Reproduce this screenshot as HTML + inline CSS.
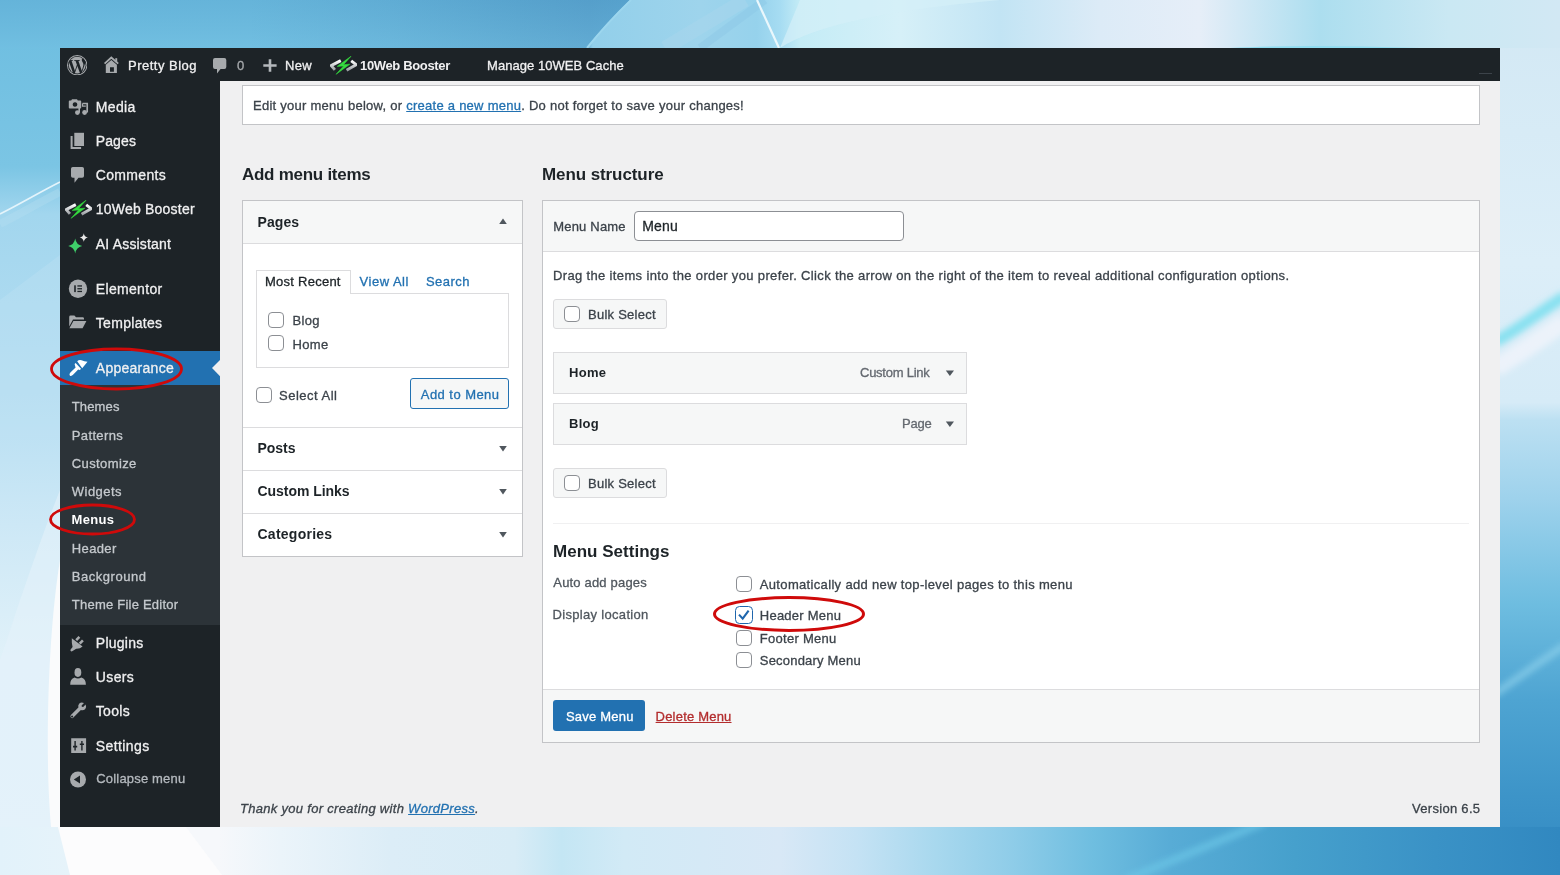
<!DOCTYPE html>
<html><head><meta charset="utf-8">
<style>
html,body{margin:0;padding:0;}
body{width:1560px;height:875px;position:relative;overflow:hidden;font-family:"Liberation Sans",sans-serif;background:#8fcbe6;}
.a{position:absolute;}
.t{position:absolute;white-space:nowrap;line-height:1;-webkit-text-stroke-width:0.3px;}
.mi{font-size:14px;color:#f0f0f1;letter-spacing:0.1px;}
.sm{font-size:13px;color:#c5c9cd;letter-spacing:0.15px;}
.bt{font-size:13px;color:#f0f0f1;letter-spacing:0.05px;}
.c{font-size:13px;color:#3c434a;letter-spacing:0.28px;}
.h{-webkit-text-stroke-width:0;font-size:17px;font-weight:bold;color:#1d2327;letter-spacing:-0.27px;}
.ah{-webkit-text-stroke-width:0;font-size:14px;font-weight:bold;color:#1d2327;letter-spacing:0.1px;}
.box{position:absolute;box-sizing:border-box;}
.cb{position:absolute;box-sizing:border-box;width:16px;height:16px;border:1px solid #8c8f94;border-radius:4px;background:#fff;}
</style></head><body>
<svg class="a" style="left:0;top:0" width="1560" height="875">
<defs><filter id="blur3" x="-50%" y="-50%" width="200%" height="200%"><feGaussianBlur stdDeviation="3"/></filter>
<linearGradient id="gTop" x1="0" y1="0" x2="1560" y2="0" gradientUnits="userSpaceOnUse">
  <stop offset="0" stop-color="#6cbde0"/>
  <stop offset="0.16" stop-color="#6dbde0"/>
  <stop offset="0.25" stop-color="#65b3d9"/>
  <stop offset="0.333" stop-color="#5ba7d0"/>
  <stop offset="0.375" stop-color="#58a2cd"/>
  <stop offset="0.38" stop-color="#92cfea"/>
  <stop offset="0.449" stop-color="#9ed4ec"/>
  <stop offset="0.485" stop-color="#96d2ec"/>
  <stop offset="0.5" stop-color="#a6dcf2"/>
  <stop offset="0.513" stop-color="#c4ecf6"/>
  <stop offset="0.577" stop-color="#d6f0f8"/>
  <stop offset="0.641" stop-color="#c2e4f4"/>
  <stop offset="0.705" stop-color="#dcebf7"/>
  <stop offset="0.769" stop-color="#e6eef8"/>
  <stop offset="0.846" stop-color="#acdeef"/>
  <stop offset="0.929" stop-color="#cae8f3"/>
  <stop offset="1" stop-color="#d2e8f4"/>
</linearGradient>
<linearGradient id="gTLv" x1="0" y1="0" x2="0" y2="48" gradientUnits="userSpaceOnUse">
  <stop offset="0" stop-color="#4f98c6" stop-opacity="0.25"/>
  <stop offset="1" stop-color="#7cc4e4" stop-opacity="0.3"/>
</linearGradient>
<linearGradient id="gTL" x1="0" y1="0" x2="640" y2="0" gradientUnits="userSpaceOnUse">
  <stop offset="0" stop-color="#6cbde0"/>
  <stop offset="0.39" stop-color="#6dbde0"/>
  <stop offset="0.61" stop-color="#65b3d9"/>
  <stop offset="0.81" stop-color="#5ba7d0"/>
  <stop offset="0.92" stop-color="#57a1cc"/>
  <stop offset="1" stop-color="#5aa6d0"/>
</linearGradient>
<linearGradient id="gBot" x1="0" y1="0" x2="1560" y2="0" gradientUnits="userSpaceOnUse">
  <stop offset="0" stop-color="#e2f2fa"/>
  <stop offset="0.045" stop-color="#e6f3fa"/>
  <stop offset="0.1" stop-color="#f6f8fb"/>
  <stop offset="0.14" stop-color="#f6f8fb"/>
  <stop offset="0.18" stop-color="#ebf4fa"/>
  <stop offset="0.25" stop-color="#dcedf7"/>
  <stop offset="0.33" stop-color="#d8ecf6"/>
  <stop offset="0.36" stop-color="#c4e6f4"/>
  <stop offset="0.4" stop-color="#d2eaf6"/>
  <stop offset="0.5" stop-color="#d8e8f6"/>
  <stop offset="0.55" stop-color="#c4e2f4"/>
  <stop offset="0.6" stop-color="#a8d8ee"/>
  <stop offset="0.65" stop-color="#8ecce8"/>
  <stop offset="0.7" stop-color="#6fbee0"/>
  <stop offset="0.75" stop-color="#58acd6"/>
  <stop offset="0.83" stop-color="#46a0cc"/>
  <stop offset="0.92" stop-color="#3a92c6"/>
  <stop offset="1" stop-color="#3188c0"/>
</linearGradient>
<linearGradient id="gLeft" x1="0" y1="0" x2="0" y2="875" gradientUnits="userSpaceOnUse">
  <stop offset="0" stop-color="#6cbde0"/>
  <stop offset="0.19" stop-color="#7bc5e4"/>
  <stop offset="0.245" stop-color="#a2d6ee"/>
  <stop offset="0.45" stop-color="#b6def2"/>
  <stop offset="0.6" stop-color="#cde8f6"/>
  <stop offset="0.75" stop-color="#e0f1f9"/>
  <stop offset="1" stop-color="#e4f2fa"/>
</linearGradient>
<linearGradient id="gRight" x1="0" y1="0" x2="0" y2="875" gradientUnits="userSpaceOnUse">
  <stop offset="0" stop-color="#d2e8f4"/>
  <stop offset="0.3" stop-color="#dceef8"/>
  <stop offset="0.46" stop-color="#d6ebf7"/>
  <stop offset="0.48" stop-color="#bce0f2"/>
  <stop offset="0.57" stop-color="#9ed2ec"/>
  <stop offset="0.69" stop-color="#6ebde0"/>
  <stop offset="0.8" stop-color="#4ea4d2"/>
  <stop offset="0.91" stop-color="#3d94c8"/>
  <stop offset="1" stop-color="#3289c2"/>
</linearGradient>
<linearGradient id="gBand" x1="0" y1="0" x2="1" y2="0">
  <stop offset="0" stop-color="#b4e0f2" stop-opacity="0.9"/>
  <stop offset="0.5" stop-color="#a8d8ee" stop-opacity="0.6"/>
  <stop offset="1" stop-color="#9ed4ec" stop-opacity="0"/>
</linearGradient>
</defs>
<rect x="0" y="0" width="1560" height="875" fill="#cfe6f2"/>
<rect x="0" y="0" width="1560" height="60" fill="url(#gTop)"/>
<path d="M0 0 H630 Q 607 22 586 48 L 578 60 H0 Z" fill="url(#gTL)"/>
<path d="M0 0 H630 Q 607 22 586 48 L 578 60 H0 Z" fill="url(#gTLv)"/>
<path d="M631 0 Q 608 22 587 48" stroke="#9cd6ee" stroke-width="2" fill="none"/>
<path d="M745 0 L665 48" stroke="#a8d6ec" stroke-width="14" opacity="0.55"/>
<path d="M765 0 L700 48" stroke="#88c4e4" stroke-width="8" opacity="0.35"/>
<path d="M757 0 L779 48" stroke="#eaf7fc" stroke-width="2.2"/>
<path d="M780 48 Q 830 15 1000 0 L 800 0 Z" fill="#d4f0f8" opacity="0.7"/>
<path d="M1230 48 Q 1300 44 1420 48 Z" fill="#8fdcf0"/>
<rect x="0" y="48" width="60" height="779" fill="url(#gLeft)"/>
<path d="M0 214 C 20 204 40 192 60 182" stroke="#e4f4fb" stroke-width="1.6" fill="none"/>
<path d="M0 224 C 20 214 40 202 60 192" stroke="#b8e0f2" stroke-width="8" fill="none" opacity="0.35"/>
<path d="M0 660 C 20 600 40 540 60 490 V827 H0 Z" fill="#e4f2fa" opacity="0.6"/><path d="M60 560 C 47 640 45 760 51 827 H60 Z" fill="#fafbfc"/><path d="M0 300 C 20 285 40 270 60 255 V 440 H0 Z" fill="#bfe3f3" opacity="0.35"/>
<path d="M0 827 C 5 850 8 860 12 875 L0 875 Z" fill="#e2f2fa"/>
<rect x="1500" y="48" width="60" height="779" fill="url(#gRight)"/>
<g filter="url(#blur3)"><path d="M1495 342 C 1520 328 1540 312 1565 296" stroke="#7fe0f0" stroke-width="11" fill="none" opacity="0.9"/><path d="M1495 368 C 1520 354 1540 338 1565 322" stroke="#eef3fb" stroke-width="18" fill="none" opacity="0.9"/></g>

<path d="M1495 694 C 1520 676 1540 662 1565 645" stroke="#8fd2ec" stroke-width="7" fill="none" opacity="0.7" filter="url(#blur3)"/>
<rect x="0" y="827" width="1560" height="48" fill="url(#gBot)"/>
<path d="M58 827 H186 L222 875 H70 Z" fill="#fcfcfd"/>
<path d="M1125 880 L1265 822" stroke="#6cc6e6" stroke-width="7" opacity="0.8" filter="url(#blur3)"/>
</svg>

<div id="wrap" style="position:absolute;left:0;top:0;width:1560px;height:875px;will-change:transform">
<div class="box" style="left:60px;top:48px;width:1440px;height:779px;background:#f0f0f1"></div>
<div class="box" style="left:60px;top:48px;width:1440px;height:33px;background:#1d2327"></div>
<div class="box" style="left:60px;top:81px;width:160px;height:746px;background:#1d2327"></div>
<div class="box" style="left:60px;top:351px;width:160px;height:34px;background:#2271b1"></div>
<div class="box" style="left:60px;top:385px;width:160px;height:240px;background:#2c3338"></div>
<svg class="a" style="left:211px;top:360px" width="10" height="18"><path d="M9 0 L1 8.1 L9 16.2 Z" fill="#f0f0f1"/></svg>
<div class="t mi" style="left:95.8px;top:100.15px;font-size:14px;letter-spacing:0.340px">Media</div>
<div class="t mi" style="left:95.8px;top:134.15px;font-size:14px;letter-spacing:0.100px">Pages</div>
<div class="t mi" style="left:95.8px;top:168.15px;font-size:14px;letter-spacing:0.320px">Comments</div>
<div class="t mi" style="left:95.8px;top:202.15px;font-size:14px;letter-spacing:0.210px">10Web Booster</div>
<div class="t mi" style="left:95.8px;top:236.75px;font-size:14px;letter-spacing:0.180px">AI Assistant</div>
<div class="t mi" style="left:95.8px;top:281.95px;font-size:14px;letter-spacing:0.320px">Elementor</div>
<div class="t mi" style="left:95.8px;top:316.15px;font-size:14px;letter-spacing:0.310px">Templates</div>
<div class="t mi" style="left:95.8px;top:361.15px;font-size:14px;letter-spacing:0.265px">Appearance</div>
<div class="t mi" style="left:95.8px;top:635.75px;font-size:14px;letter-spacing:0.260px">Plugins</div>
<div class="t mi" style="left:95.8px;top:670.15px;font-size:14px;letter-spacing:0.360px">Users</div>
<div class="t mi" style="left:95.8px;top:704.45px;font-size:14px;letter-spacing:0.300px">Tools</div>
<div class="t mi" style="left:95.8px;top:738.95px;font-size:14px;letter-spacing:0.400px">Settings</div>
<div class="t mi" style="left:96.3px;top:771.70px;font-size:13px;color:#b4b9be;letter-spacing:0.18px">Collapse menu</div>
<div class="t sm" style="left:71.8px;top:400.10px;font-size:13px;letter-spacing:0.130px">Themes</div>
<div class="t sm" style="left:71.8px;top:428.70px;font-size:13px;letter-spacing:0.360px">Patterns</div>
<div class="t sm" style="left:71.8px;top:456.90px;font-size:13px;letter-spacing:0.390px">Customize</div>
<div class="t sm" style="left:71.8px;top:485.10px;font-size:13px;letter-spacing:0.470px">Widgets</div>
<div class="t sm" style="left:71.5px;top:513.30px;font-size:13px;-webkit-text-stroke-width:0;color:#fff;font-weight:bold;letter-spacing:0.340px">Menus</div>
<div class="t sm" style="left:71.8px;top:541.50px;font-size:13px;letter-spacing:0.370px">Header</div>
<div class="t sm" style="left:71.8px;top:569.70px;font-size:13px;letter-spacing:0.520px">Background</div>
<div class="t sm" style="left:71.8px;top:597.90px;font-size:13px;letter-spacing:0.230px">Theme File Editor</div>
<div class="t bt" style="left:128px;top:59.10px;font-size:13px;letter-spacing:0.5px">Pretty Blog</div>
<div class="t bt" style="left:237px;top:59.10px;font-size:13px;color:#a7aaad">0</div>
<div class="t bt" style="left:285px;top:59.10px;font-size:13px;letter-spacing:0.3px">New</div>
<div class="t bt" style="left:360px;top:59.10px;font-size:13px;-webkit-text-stroke-width:0;font-weight:bold;letter-spacing:-0.35px">10Web Booster</div>
<div class="t bt" style="left:487px;top:59.10px;font-size:13px;">Manage 10WEB Cache</div>
<div class="box" style="left:242px;top:85px;width:1238px;height:40px;background:#fff;border:1px solid #c3c4c7"></div>
<div class="t c" style="left:253px;top:99.00px;font-size:13px;letter-spacing:0.26px">Edit your menu below, or <span style="color:#2271b1;text-decoration:underline">create a new menu</span>. Do not forget to save your changes!</div>
<div class="t h" style="left:242px;top:165.51px;font-size:17px;">Add menu items</div>
<div class="t h" style="left:542px;top:165.51px;font-size:17px;letter-spacing:-0.09px">Menu structure</div>
<div class="box" style="left:242px;top:200px;width:281px;height:357px;background:#fff;border:1px solid #c3c4c7"></div>
<div class="box" style="left:243px;top:201px;width:279px;height:43px;background:#f6f7f7;border-bottom:1px solid #dcdcde"></div>
<div class="t ah" style="left:257.5px;top:214.65px;font-size:14px;">Pages</div>
<svg class="a" style="left:498px;top:218px" width="10" height="7"><path d="M1.2 6 L5 0.6 L8.8 6 Z" fill="#50575e"/></svg>
<div class="box" style="left:256px;top:293px;width:253px;height:75px;background:#fff;border:1px solid #dcdcde"></div>
<div class="box" style="left:256px;top:270px;width:95px;height:24px;background:#fff;border:1px solid #dcdcde;border-bottom:none"></div>
<div class="t c" style="left:265px;top:275.30px;font-size:13px;color:#1d2327;letter-spacing:0.25px">Most Recent</div>
<div class="t c" style="left:359.6px;top:275.30px;font-size:13px;color:#2271b1;letter-spacing:0.5px">View All</div>
<div class="t c" style="left:426px;top:275.30px;font-size:13px;color:#2271b1;letter-spacing:0.45px">Search</div>
<div class="cb" style="left:268px;top:311.5px"></div>
<div class="cb" style="left:268px;top:335.2px"></div>
<div class="t c" style="left:292.6px;top:314.40px;font-size:13px;">Blog</div>
<div class="t c" style="left:292.6px;top:338.00px;font-size:13px;">Home</div>
<div class="cb" style="left:256px;top:386.5px"></div>
<div class="t c" style="left:279px;top:388.60px;font-size:13px;letter-spacing:0.5px">Select All</div>
<div class="box" style="left:410px;top:378px;width:99px;height:31px;background:#f6f7f7;border:1px solid #2271b1;border-radius:3px"></div>
<div class="t c" style="left:420.8px;top:387.90px;font-size:13px;color:#2271b1;letter-spacing:0.45px">Add to Menu</div>
<div class="box" style="left:243px;top:427px;width:279px;height:1px;background:#dcdcde"></div>
<div class="t ah" style="left:257.5px;top:440.65px;font-size:14px;letter-spacing:-0.05px">Posts</div>
<svg class="a" style="left:498px;top:445px" width="10" height="7"><path d="M1.2 1 L8.8 1 L5 6.6 Z" fill="#50575e"/></svg>
<div class="box" style="left:243px;top:470px;width:279px;height:1px;background:#dcdcde"></div>
<div class="t ah" style="left:257.5px;top:483.65px;font-size:14px;letter-spacing:-0.05px">Custom Links</div>
<svg class="a" style="left:498px;top:488px" width="10" height="7"><path d="M1.2 1 L8.8 1 L5 6.6 Z" fill="#50575e"/></svg>
<div class="box" style="left:243px;top:513px;width:279px;height:1px;background:#dcdcde"></div>
<div class="t ah" style="left:257.5px;top:526.65px;font-size:14px;letter-spacing:0.25px">Categories</div>
<svg class="a" style="left:498px;top:531px" width="10" height="7"><path d="M1.2 1 L8.8 1 L5 6.6 Z" fill="#50575e"/></svg>
<div class="box" style="left:542px;top:200px;width:938px;height:543px;background:#fff;border:1px solid #c3c4c7"></div>
<div class="box" style="left:543px;top:201px;width:936px;height:51px;background:#f6f7f7;border-bottom:1px solid #dcdcde"></div>
<div class="t c" style="left:553.2px;top:220.30px;font-size:13px;letter-spacing:0.2px">Menu Name</div>
<div class="box" style="left:634px;top:211px;width:270px;height:30px;background:#fff;border:1px solid #8c8f94;border-radius:4px"></div>
<div class="t c" style="left:642.2px;top:219.15px;font-size:14px;color:#1d2327;letter-spacing:0.2px">Menu</div>
<div class="t c" style="left:553px;top:269.40px;font-size:13px;letter-spacing:0.35px">Drag the items into the order you prefer. Click the arrow on the right of the item to reveal additional configuration options.</div>
<div class="box" style="left:553px;top:299px;width:114px;height:30px;background:#f6f7f7;border:1px solid #dcdcde;border-radius:3px"></div>
<div class="cb" style="left:564px;top:305.5px"></div>
<div class="t c" style="left:588px;top:308.00px;font-size:13px;letter-spacing:0.25px">Bulk Select</div>
<div class="box" style="left:553px;top:468px;width:114px;height:30px;background:#f6f7f7;border:1px solid #dcdcde;border-radius:3px"></div>
<div class="cb" style="left:564px;top:474.5px"></div>
<div class="t c" style="left:588px;top:477.00px;font-size:13px;letter-spacing:0.25px">Bulk Select</div>
<div class="box" style="left:553px;top:352px;width:414px;height:42px;background:#f6f7f7;border:1px solid #dcdcde"></div>
<div class="t ah" style="left:569px;top:366.40px;font-size:13px;letter-spacing:0.3px">Home</div>
<div class="t c" style="left:860px;top:366.40px;font-size:13px;color:#646970;letter-spacing:-0.25px">Custom Link</div>
<svg class="a" style="left:945px;top:370px" width="10" height="7"><path d="M0.8 0.5 L9 0.5 L4.9 6 Z" fill="#50575e"/></svg>
<div class="box" style="left:553px;top:403px;width:414px;height:42px;background:#f6f7f7;border:1px solid #dcdcde"></div>
<div class="t ah" style="left:569px;top:417.40px;font-size:13px;letter-spacing:0.3px">Blog</div>
<div class="t c" style="left:902px;top:417.40px;font-size:13px;color:#646970;letter-spacing:-0.25px">Page</div>
<svg class="a" style="left:945px;top:421px" width="10" height="7"><path d="M0.8 0.5 L9 0.5 L4.9 6 Z" fill="#50575e"/></svg>
<div class="box" style="left:553px;top:523px;width:916px;height:1px;background:#f0f0f1"></div>
<div class="t h" style="left:553px;top:543.41px;font-size:17px;letter-spacing:0.02px">Menu Settings</div>
<div class="t c" style="left:553.3px;top:576.30px;font-size:13px;color:#50575e;letter-spacing:0.18px">Auto add pages</div>
<div class="t c" style="left:552.6px;top:608.40px;font-size:13px;color:#50575e;letter-spacing:0.31px">Display location</div>
<div class="cb" style="left:736px;top:575.6px"></div>
<div class="t c" style="left:759.8px;top:577.80px;font-size:13px;letter-spacing:0.334px">Automatically add new top-level pages to this menu</div>
<div class="cb" style="left:735.3px;top:606.1px;width:17.5px;height:17.5px;border:1.9px solid #1f66ad;border-radius:4.5px"></div>
<svg class="a" style="left:735.3px;top:606.1px" width="18" height="18"><path d="M4 8.6 L7.7 12.6 L13.6 4.6" stroke="#1f66ad" stroke-width="2.1" fill="none"/></svg>
<div class="t c" style="left:759.8px;top:609.20px;font-size:13px;letter-spacing:0.236px">Header Menu</div>
<div class="cb" style="left:736px;top:629.6px"></div>
<div class="t c" style="left:759.8px;top:631.80px;font-size:13px;letter-spacing:0.273px">Footer Menu</div>
<div class="cb" style="left:736px;top:651.7px"></div>
<div class="t c" style="left:759.8px;top:653.90px;font-size:13px;letter-spacing:0.2px">Secondary Menu</div>
<div class="box" style="left:543px;top:689px;width:936px;height:53px;background:#f6f7f7;border-top:1px solid #dcdcde"></div>
<div class="box" style="left:553px;top:700px;width:92px;height:31px;background:#2271b1;border-radius:3px"></div>
<div class="t c" style="left:566px;top:710.00px;font-size:13px;color:#fff;letter-spacing:0.2px">Save Menu</div>
<div class="t c" style="left:655.6px;top:710.00px;font-size:13px;color:#b32d2e;letter-spacing:0.2px"><span style="text-decoration:underline">Delete Menu</span></div>
<div class="t c" style="left:240px;top:801.50px;font-size:13px;letter-spacing:0.3px"><i>Thank you for creating with <span style="color:#2271b1;text-decoration:underline">WordPress</span>.</i></div>
<div class="t c" style="left:1412px;top:801.50px;font-size:13px;letter-spacing:0.3px">Version 6.5</div>
<svg class="a" style="left:66.8px;top:54.6px" width="20.4" height="20.4" viewBox="0 0 24 24"><defs><clipPath id="wpc"><circle cx="12" cy="12" r="10.6"/></clipPath></defs><circle cx="12" cy="12" r="11.4" fill="none" stroke="#a7aaad" stroke-width="1.2"/><circle cx="12" cy="12" r="9.9" fill="#a7aaad"/><path d="M21.469 6.825c.84 1.537 1.318 3.3 1.318 5.175 0 3.979-2.156 7.456-5.363 9.325l3.295-9.527c.615-1.54.82-2.771.82-3.864 0-.405-.026-.78-.07-1.11m-7.981.105c.647-.03 1.232-.105 1.232-.105.582-.075.514-.93-.067-.899 0 0-1.755.135-2.88.135-1.064 0-2.850-.15-2.850-.15-.585-.03-.661.855-.075.885 0 0 .54.061 1.125.09l1.68 4.605-2.37 7.08L5.354 6.9c.649-.03 1.234-.1 1.234-.1.585-.075.516-.93-.065-.896 0 0-1.746.138-2.874.138-.2 0-.438-.008-.69-.015C4.911 3.15 8.235 1.215 12 1.215c2.809 0 5.365 1.072 7.286 2.833-.046-.003-.091-.009-.141-.009-1.06 0-1.812.923-1.812 1.914 0 .89.513 1.643 1.06 2.531.411.72.89 1.643.89 2.977 0 .915-.354 1.994-.821 3.479l-1.075 3.585-3.9-11.61.001.014zM12 22.784c-1.059 0-2.081-.153-3.048-.437l3.237-9.406 3.315 9.087c.024.053.05.101.078.149-1.12.393-2.325.609-3.582.609M1.211 12c0-1.564.336-3.05.935-4.39L7.29 21.709C3.694 19.960 1.212 16.271 1.211 12M12 0C5.385 0 0 5.385 0 12s5.385 12 12 12 12-5.385 12-12S18.615 0 12 0" fill="#1d2327" clip-path="url(#wpc)"/></svg>
<svg class="a" style="left:103px;top:56px" width="18" height="19" viewBox="0 0 18 19"><path d="M1.6 7.6 L8.3 1.6 L15.2 7.6" stroke="#a7aaad" stroke-width="1.9" fill="none" stroke-linejoin="miter"/><rect x="12.3" y="2.2" width="1.9" height="4" fill="#a7aaad"/><path d="M2.8 8.8 L8.3 4 L13.9 8.8 V17 H2.8 Z M7 11.2 V15.8 H10.9 V11.2 Z" fill="#a7aaad" fill-rule="evenodd"/></svg>
<svg class="a" style="left:212px;top:57px" width="16" height="18" viewBox="0 0 16 18"><path d="M3 1 H12.3 Q14.3 1 14.3 3 V10 Q14.3 12 12.3 12 H8.6 L5 16.5 V12 H3 Q1 12 1 10 V3 Q1 1 3 1 Z" fill="#a7aaad"/></svg>
<svg class="a" style="left:262px;top:58px" width="16" height="16" viewBox="0 0 16 16"><path d="M8 1.2 V13.8 M1.3 7.5 H14.6" stroke="#b4b8bc" stroke-width="2.6"/></svg>
<svg class="a" style="left:329.5px;top:55.5px" width="27" height="19" viewBox="0 0 27 19"><defs><linearGradient id="tw" x1="0" y1="0" x2="0" y2="1"><stop offset="0" stop-color="#ffffff"/><stop offset="1" stop-color="#9da1a5"/></linearGradient></defs><path d="M10.8 4.6 L1.2 9.6 L4.9 13.9" stroke="url(#tw)" stroke-width="2.9" fill="none" stroke-linejoin="round"/><path d="M21.2 4.9 L26.2 8.7 L16.6 14.2" stroke="url(#tw)" stroke-width="2.9" fill="none" stroke-linejoin="round"/><path d="M21 0.3 L7.2 10.4 L13.6 9.9 L6.1 18.3 L19.8 8.2 L13.4 8.7 Z" fill="#35dd3f" stroke="#35dd3f" stroke-width="0.6" stroke-linejoin="round"/></svg>
<svg class="a" style="left:64.5px;top:200.3px" width="27" height="19" viewBox="0 0 27 19"><defs><linearGradient id="tw" x1="0" y1="0" x2="0" y2="1"><stop offset="0" stop-color="#ffffff"/><stop offset="1" stop-color="#9da1a5"/></linearGradient></defs><path d="M10.8 4.6 L1.2 9.6 L4.9 13.9" stroke="url(#tw)" stroke-width="2.9" fill="none" stroke-linejoin="round"/><path d="M21.2 4.9 L26.2 8.7 L16.6 14.2" stroke="url(#tw)" stroke-width="2.9" fill="none" stroke-linejoin="round"/><path d="M21 0.3 L7.2 10.4 L13.6 9.9 L6.1 18.3 L19.8 8.2 L13.4 8.7 Z" fill="#35dd3f" stroke="#35dd3f" stroke-width="0.6" stroke-linejoin="round"/></svg>
<svg class="a" style="left:68px;top:96px" width="21" height="21" viewBox="0 0 21 21"><path d="M4 3.2 H9 L9.8 4.5 H12.3 Q13.2 4.5 13.2 5.4 V11.6 Q13.2 12.5 12.3 12.5 H1.7 Q0.8 12.5 0.8 11.6 V5.4 Q0.8 4.5 1.7 4.5 H3.2 Z M7 6.2 A2.3 2.3 0 1 0 7.01 6.2 Z" fill="#a7aaad" fill-rule="evenodd"/><path d="M14.5 7.5 H19.2 V16.5" stroke="#a7aaad" stroke-width="1.7" fill="none"/><path d="M14.5 7.5 V10.2 H17.8" stroke="#a7aaad" stroke-width="1.2" fill="none"/><circle cx="16.6" cy="16.5" r="2.4" fill="#a7aaad"/><path d="M11.2 11.5 V16.5" stroke="#a7aaad" stroke-width="1.6"/><circle cx="9.4" cy="16.6" r="2.4" fill="#a7aaad"/></svg>
<svg class="a" style="left:70px;top:132px" width="16" height="18" viewBox="0 0 16 18"><path d="M1.6 4 V16 H11.1" stroke="#a7aaad" stroke-width="2" fill="none"/><rect x="4.3" y="0.8" width="9.7" height="13.2" fill="#a7aaad"/></svg>
<svg class="a" style="left:70px;top:166px" width="16" height="18" viewBox="0 0 16 18"><path d="M2.8 1 H12.2 Q14 1 14 2.8 V9.9 Q14 11.7 12.2 11.7 H8.5 L4.5 16.8 V11.7 H2.8 Q1 11.7 1 9.9 V2.8 Q1 1 2.8 1 Z" fill="#a7aaad"/></svg>
<svg class="a" style="left:66px;top:231px" width="24" height="25" viewBox="0 0 24 25"><path d="M9.2 7.5 Q10.2 13.8 16.2 15 Q10.2 16.3 9.2 22.5 Q8.2 16.3 2.2 15 Q8.2 13.8 9.2 7.5 Z" fill="#3fcf6a"/><path d="M17.8 2.2 Q18.4 5.9 21.9 6.5 Q18.4 7.2 17.8 10.8 Q17.2 7.2 13.7 6.5 Q17.2 5.9 17.8 2.2 Z" fill="#e8e8e8"/></svg>
<svg class="a" style="left:68px;top:279px" width="20" height="20" viewBox="0 0 20 20"><circle cx="10" cy="9.8" r="9.2" fill="#a7aaad"/><rect x="6.2" y="6.3" width="1.6" height="6.8" fill="#1d2327"/><rect x="9.4" y="6.3" width="4.6" height="1.3" fill="#1d2327"/><rect x="9.4" y="9.1" width="4.6" height="1.3" fill="#1d2327"/><rect x="9.4" y="11.8" width="4.6" height="1.3" fill="#1d2327"/></svg>
<svg class="a" style="left:68px;top:314px" width="20" height="16" viewBox="0 0 20 16"><path d="M1.2 12.5 V3 Q1.2 1.6 2.6 1.6 H6.4 L8 3.2 H14.6 Q16 3.2 16 4.6 V5.6 H5 Z" fill="#a7aaad"/><path d="M1.4 14.2 L5.4 7 H18.4 L14.6 14.2 Z" fill="#a7aaad"/></svg>
<svg class="a" style="left:68px;top:358px" width="21" height="20" viewBox="0 0 21 20"><path d="M9.2 3.3 Q11 1.4 13.5 2.2 Q16.2 3.3 19.5 3.7 L14.2 10.2 Z" fill="#fff"/><path d="M7.6 5 L13 10.8 L11.9 12 Q10.7 11.8 10.2 11.4 L4.8 17.1 Q3.1 18.6 1.8 17.4 Q0.8 16.2 2.4 14.5 L7.6 9.4 Q7.2 8.6 7 7.6 L6.6 6 Z" fill="#fff"/></svg>
<svg class="a" style="left:68px;top:634px" width="20" height="18" viewBox="0 0 20 18"><path d="M3.8 4.2 L14.6 12.6 Q12 15 8.2 14.8 L4.6 17 Q3.4 17.8 2.7 16.9 Q1.9 16 3 14.9 L4.6 13 Q3.5 9 3.8 4.2 Z" fill="#a7aaad"/><path d="M8.2 6.1 L11.4 2.9 M11.7 9.6 L14.9 6.4" stroke="#a7aaad" stroke-width="2.6"/></svg>
<svg class="a" style="left:68px;top:665px" width="20" height="22" viewBox="0 0 20 22"><ellipse cx="9.9" cy="7.5" rx="3.4" ry="4.4" fill="#a7aaad"/><path d="M2.2 19.8 Q2 14.2 6.6 12.6 Q9.9 14.6 13.4 12.6 Q18 14.2 17.9 19.8 Z" fill="#a7aaad"/></svg>
<svg class="a" style="left:68px;top:701px" width="20" height="20" viewBox="0 0 20 20"><path d="M17.6 3.6 L15.2 6 L13.8 5.8 L13.6 4.4 L16 2 Q13.4 0.6 11.3 2.4 Q9.7 4.2 10.4 6.6 L2.9 14.1 Q1.8 15.4 2.9 16.6 Q4.1 17.7 5.4 16.6 L12.9 9.1 Q15.3 9.8 17.1 8.2 Q18.9 6.2 17.6 3.6 Z M4.1 14.5 A1.05 1.05 0 1 0 4.11 14.5 Z" fill="#a7aaad" fill-rule="evenodd"/></svg>
<svg class="a" style="left:68px;top:736px" width="20" height="20" viewBox="0 0 20 20"><path d="M3.2 2.2 H18.1 V16.9 H3.2 Z M6.4 5 V9.8 H5 V11.4 H6.4 V14.6 H7.8 V11.4 H9.2 V9.8 H7.8 V5 Z M13.2 5 V7.4 H11.8 V9 H13.2 V14.6 H14.6 V9 H16 V7.4 H14.6 V5 Z" fill="#a7aaad" fill-rule="evenodd"/></svg>
<svg class="a" style="left:68px;top:769px" width="20" height="20" viewBox="0 0 20 20"><circle cx="10" cy="10.5" r="8" fill="#a7aaad"/><path d="M5.8 10.5 L12 6.6 V14.4 Z" fill="#1d2327"/></svg>
<div class="box" style="left:1479px;top:73px;width:13px;height:1px;background:#3c434a"></div>
<svg class="a" style="left:0;top:0" width="1560" height="875"><ellipse cx="116.5" cy="369" rx="65" ry="20" fill="none" stroke="#cf0a0a" stroke-width="2.8"/><ellipse cx="92.5" cy="519.5" rx="42" ry="14.5" fill="none" stroke="#cf0a0a" stroke-width="2.8"/><ellipse cx="789" cy="614" rx="74.5" ry="16.4" fill="none" stroke="#cf0a0a" stroke-width="3"/></svg>

</div>
</body></html>
